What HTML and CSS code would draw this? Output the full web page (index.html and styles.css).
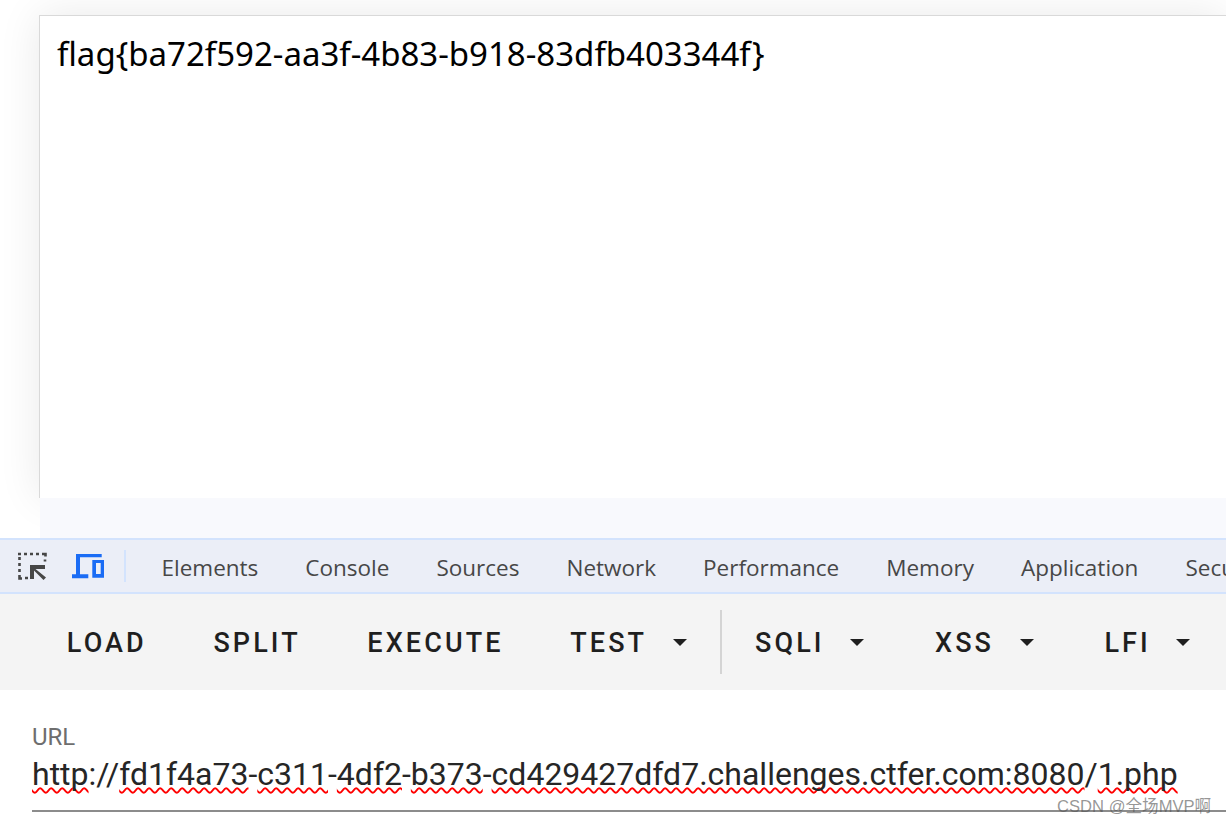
FILE: index.html
```html
<!DOCTYPE html>
<html lang="en">
<head>
<meta charset="utf-8">
<title>flag</title>
<link rel="stylesheet" href="styles.css">
</head>
<body>
<div class="stage">
  <div class="panel"><p class="flag">flag{ba72f592-aa3f-4b83-b918-83dfb403344f}</p></div>
  <div class="under"></div>
</div>
<div class="tabbar">
  <button class="ico" aria-label="Inspect">
    <svg width="30" height="30" viewBox="0 0 30 30">
      <path d="M1 3h3M7 3h3M13 3h3M19 3h3M25 3h3.500v2.500M28 8.500v2M2.500 6v3M2.500 12v3M2.500 18v3M2.500 24v3.500H5M8 27h3" fill="none" stroke="#474747" stroke-width="2.600"/>
      <path d="M13 14h15v4h-9.500L29 26.500 26.500 29 17 19.500V28h-4z" fill="#474747"/>
    </svg>
  </button>
  <button class="ico" aria-label="Device toolbar">
    <svg width="32" height="26" viewBox="0 0 32 26">
      <path d="M4 1h25.700v3.300H8v17h8.300v4H0v-4h4z" fill="#1a6cf5"/>
      <path d="M20.300 7H32v17.700H20.300zM24 10v11h4.700V10z" fill="#1a6cf5" fill-rule="evenodd"/>
    </svg>
  </button>
  <span class="sep"></span>
  <nav class="tabs">
    <span class="tab">Elements</span>
    <span class="tab">Console</span>
    <span class="tab">Sources</span>
    <span class="tab">Network</span>
    <span class="tab">Performance</span>
    <span class="tab">Memory</span>
    <span class="tab">Application</span>
    <span class="tab">Security</span>
  </nav>
</div>
<div class="toolbar">
  <span class="btn">LOAD</span>
  <span class="btn">SPLIT</span>
  <span class="btn">EXECUTE</span>
  <span class="btn drop">TEST<i class="caret"></i></span>
  <span class="divider"></span>
  <span class="btn drop">SQLI<i class="caret"></i></span>
  <span class="btn drop">XSS<i class="caret"></i></span>
  <span class="btn drop">LFI<i class="caret"></i></span>
</div>
<div class="field">
  <div class="label">URL</div>
  <div class="value"><span class="sp">http</span>://<span class="sp">fd1f4a73</span>-<span class="sp">c311</span>-<span class="sp">4df2</span>-<span class="sp">b373</span>-<span class="sp">cd429427dfd7.challenges.ctfer.com:8080</span>/<span class="sp">1.php</span></div>
</div>
<div class="mark">CSDN @全场MVP啊</div>
</body>
</html>
```
FILE: styles.css
```css
* { box-sizing: border-box; }
html, body { margin: 0; padding: 0; }
body { width: 1226px; height: 824px; overflow: hidden; background: #fff; position: relative; font-family: Roboto, sans-serif; }

.stage { height: 538px; padding: 15px 0 0 39px; overflow: hidden; background: #fff; }
.panel { height: 483px; background: #fff; border: 1px solid #d9d9d9; border-right: 0; border-bottom: 0; box-shadow: 0 0 40px rgba(0,0,0,.09); position: relative; z-index: 1; }
.flag { margin: 0; padding: 15px 0 0 17px; font: 33px/46px "Noto Sans", sans-serif; color: #000; white-space: nowrap; }
.under { height: 40px; margin-left: 1px; background: #f8f9fd; position: relative; z-index: 2; }

.tabbar { height: 56px; display: flex; align-items: center; background: #ebeef7; border-top: 2px solid #d3e3fd; border-bottom: 2px solid #d3e3fd; padding-left: 17px; overflow: hidden; }
.ico { padding: 0; border: 0; background: none; display: flex; flex: none; }
.ico:nth-child(2) { margin-left: 25px; }
.sep { flex: none; width: 2px; height: 32px; background: #d3e3fd; margin-left: 20px; }
.tabs { display: flex; gap: 47px; margin-left: 35.500px; padding-top: 2px; font: 22.500px "Open Sans", sans-serif; color: #474747; white-space: nowrap; }

.toolbar { height: 96px; display: flex; align-items: center; background: #f4f4f4; padding: 1px 0 0 33.500px; overflow: hidden; }
.btn { flex: none; padding: 0 33.300px; font: 500 27px Roboto, sans-serif; letter-spacing: 3.100px; color: #1f1f1f; white-space: nowrap; display: flex; align-items: center; }
.btn.drop { padding-right: 37.500px; }
.caret { width: 0; height: 0; margin-left: 25.600px; border: 7px solid transparent; border-top-color: #1f1f1f; border-bottom: 0; }
.divider { flex: none; width: 2px; height: 64px; margin-top: -1px; background: #d4d4d4; margin-left: -4.500px; margin-right: 0; }

.field { margin: 0 0 0 32px; height: 122px; border-bottom: 2px solid #8c8c8c; padding-top: 34px; }
.label { font: 24px/26px Roboto, sans-serif; color: #6e6e6e; }
.value { font: 32px/44px Roboto, sans-serif; color: #262626; white-space: nowrap; padding-top: 2px; }
.sp { text-decoration: underline wavy #f00 2.200px; text-underline-offset: 1.500px; text-decoration-skip-ink: none; }

.mark { position: absolute; left: 1057px; top: 793px; font: 16.600px "Liberation Sans", "Noto Sans CJK SC", sans-serif; color: rgba(80,80,80,.6); white-space: nowrap; }
```
